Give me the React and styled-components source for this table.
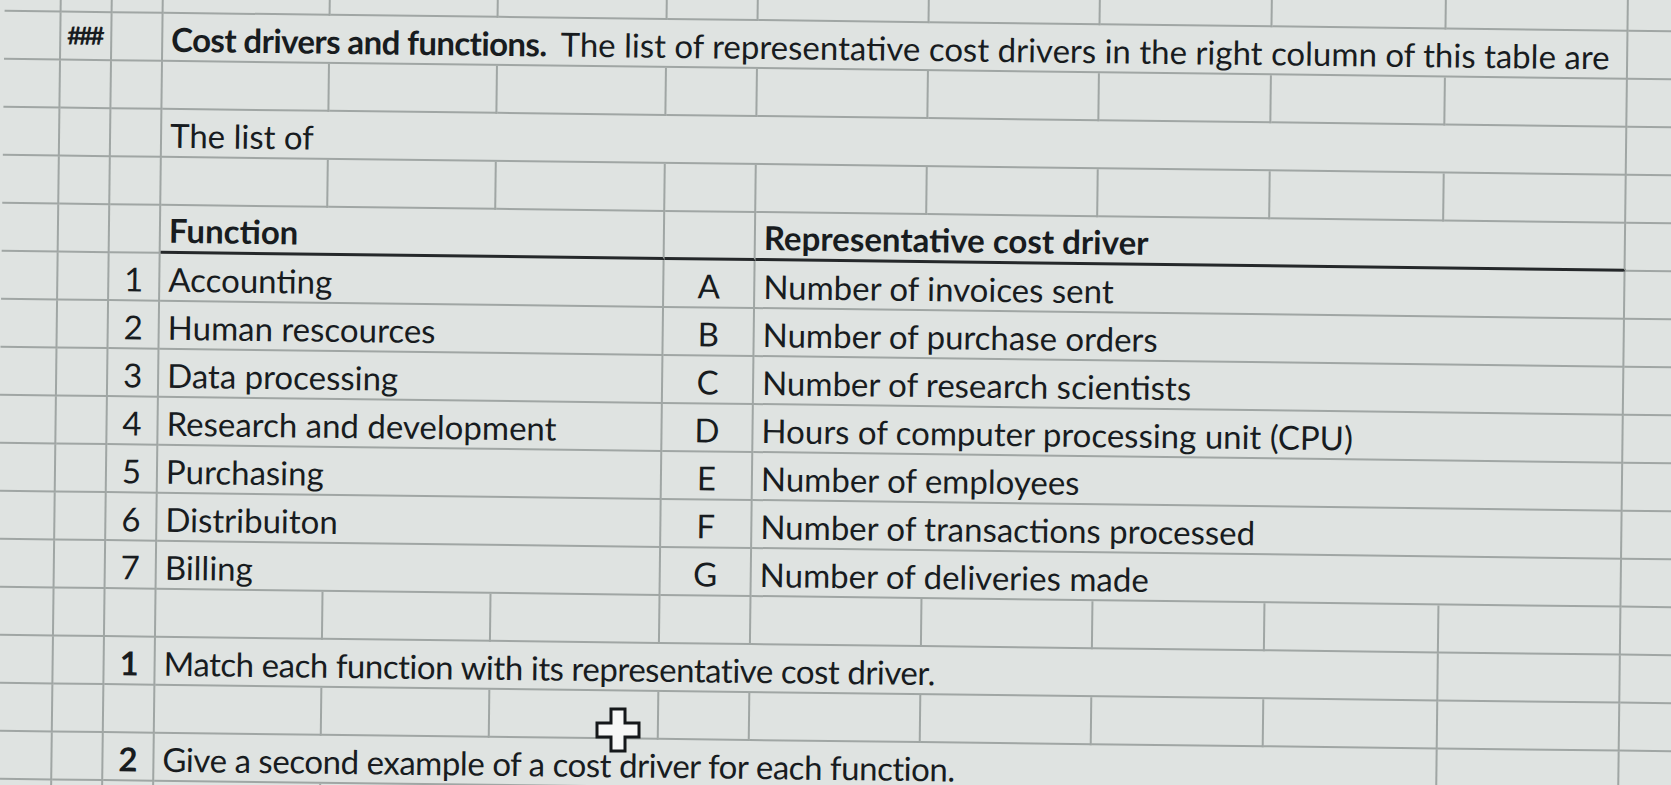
import React from 'react';
import styled, { createGlobalStyle } from 'styled-components';

const GlobalStyle = createGlobalStyle`
  html, body {
    margin: 0;
    padding: 0;
    background: #dfe3e1;
    overflow: hidden;
  }
`;

const Page = styled.div`
  position: relative;
  width: 1671px;
  height: 785px;
  overflow: hidden;
  background: #dfe3e1;
  font-family: Lato, "Liberation Sans", sans-serif;
  color: #181c1f;
`;

const Sheet = styled.div`
  display: grid;
  grid-template-columns: 57px 51px 51px 167px 168px 169px 91px 171px 171px 172px 174px 182px 80px;
  grid-template-rows: 70px repeat(17, 48px);
  margin-top: -48px;
  transform: rotate(0.7deg);
  transform-origin: 835px 440px;
`;

const Cell = styled.div`
  grid-column: span ${(p) => p.$span || 1};
  box-sizing: border-box;
  display: flex;
  align-items: flex-end;
  justify-content: ${(p) => p.$align || 'flex-start'};
  padding: 0 ${(p) => (p.$align === 'center' ? 0 : 8)}px 3px;
  border-right: 2px solid #a0a6a4;
  border-bottom: ${(p) => (p.$rule ? '3px solid #25282a' : '2px solid #a0a6a4')};
  font-size: 33px;
  line-height: 1.1;
  font-weight: ${(p) => (p.$bold ? 700 : 400)};
  letter-spacing: ${(p) => (p.$tight ? '-0.45px' : 'normal')};
  white-space: pre;
  overflow: visible;
`;

const Hashes = styled.span`
  font-size: 25px;
  font-weight: 700;
  letter-spacing: -3px;
  padding: 0 3px 7px 0;
`;

const Lead = styled.b`
  letter-spacing: -0.6px;
  margin-right: 14px;
`;

const Cursor = styled.svg`
  position: absolute;
  left: 595px;
  top: 707px;
`;

const functions = [
  'Accounting',
  'Human rescources',
  'Data processing',
  'Research and development',
  'Purchasing',
  'Distribuiton',
  'Billing',
];

const drivers = [
  'Number of invoices sent',
  'Number of purchase orders',
  'Number of research scientists',
  'Hours of computer processing unit (CPU)',
  'Number of employees',
  'Number of transactions processed',
  'Number of deliveries made',
];

const letters = ['A', 'B', 'C', 'D', 'E', 'F', 'G'];

const blank = () => Array.from({ length: 13 }, () => ({}));

const rows = [
  blank(),
  [{}, { hashes: true, align: 'center' }, {}, { span: 9, text: 'title' }, {}],
  blank(),
  [{}, {}, {}, { span: 9, text: 'The list of' }, {}],
  blank(),
  [
    {}, {}, {},
    { span: 3, text: 'Function', bold: true, rule: true },
    { rule: true },
    { span: 5, text: 'Representative cost driver', bold: true, rule: true },
    {},
  ],
  ...functions.map((f, i) => [
    {}, {},
    { text: String(i + 1), align: 'center' },
    { span: 3, text: f },
    { text: letters[i], align: 'center' },
    { span: 5, text: drivers[i] },
    {},
  ]),
  blank(),
  [{}, {}, { text: '1', bold: true, align: 'center' }, { span: 8, text: 'Match each function with its representative cost driver.', tight: true }, {}, {}],
  blank(),
  [{}, {}, { text: '2', bold: true, align: 'center' }, { span: 8, text: 'Give a second example of a cost driver for each function.', tight: true }, {}, {}],
  blank(),
];

const Title = () => (
  <>
    <Lead>Cost drivers and functions.</Lead>
    {'The list of representative cost drivers in the right column of this table are'}
  </>
);

const App = () => {
  return (
    <Page>
      <GlobalStyle />
      <Sheet>
        {rows.map((row, r) =>
          row.map((c, i) => (
            <Cell
              key={`${r}-${i}`}
              $span={c.span}
              $align={c.align}
              $bold={c.bold}
              $rule={c.rule}
              $tight={c.tight}
            >
              {c.hashes && <Hashes>###</Hashes>}
              {c.text === 'title' ? <Title /> : c.text}
            </Cell>
          ))
        )}
      </Sheet>
      <Cursor width="46" height="46" viewBox="0 0 46 46">
        <path
          d="M16 2 H30 V16 H44 V30 H30 V44 H16 V30 H2 V16 H16 Z"
          fill="#f6f7f6"
          stroke="#15181a"
          strokeWidth="3"
          strokeLinejoin="miter"
        />
      </Cursor>
    </Page>
  );
};

export default App;
